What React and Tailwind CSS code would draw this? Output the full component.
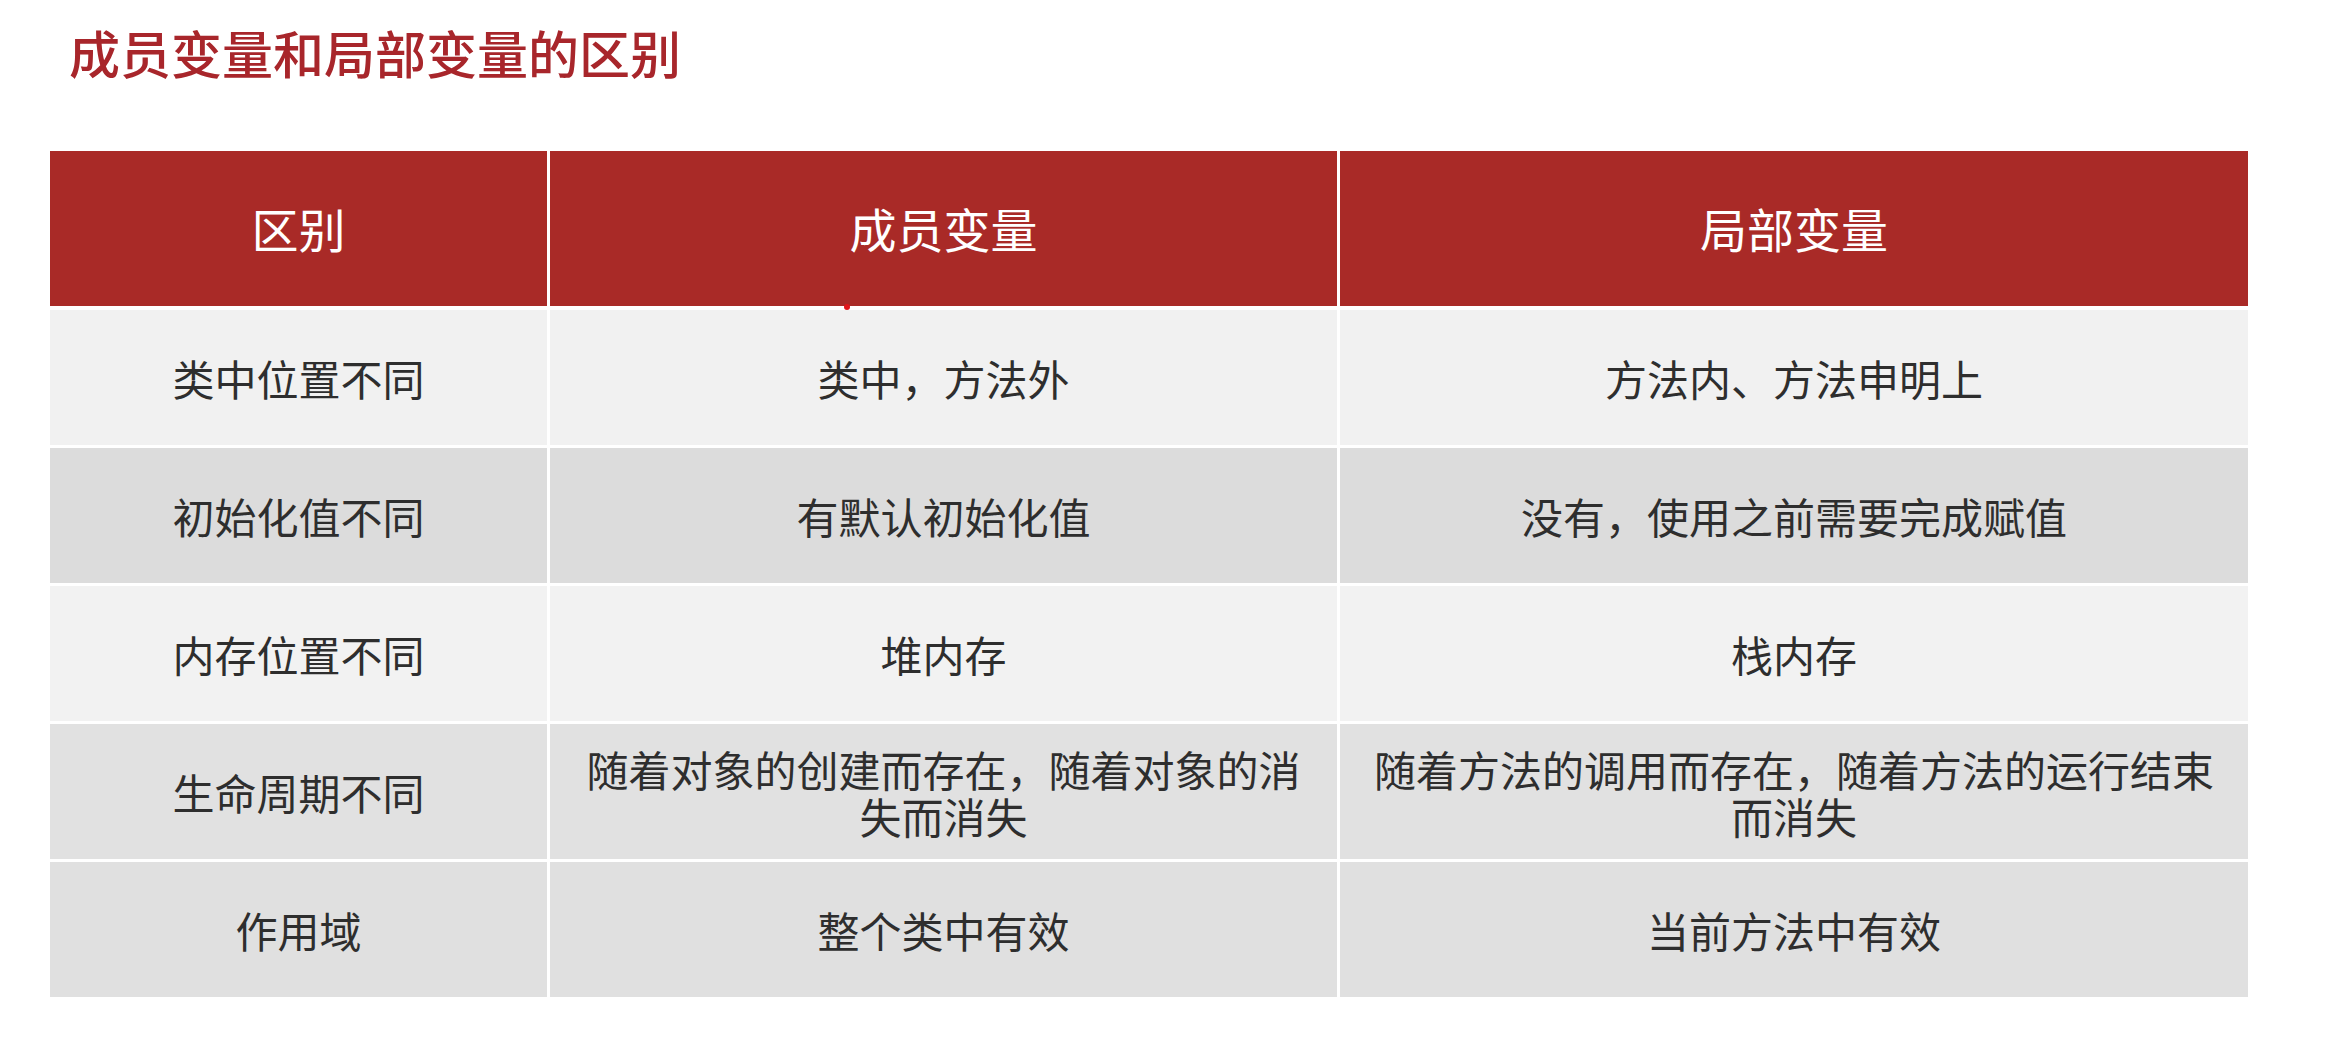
import React from "react";

const rows = [
  { k: "类中位置不同", a: "类中，方法外", b: "方法内、方法申明上", bg: "bg-[#f1f1f1]" },
  { k: "初始化值不同", a: "有默认初始化值", b: "没有，使用之前需要完成赋值", bg: "bg-[#dcdcdc]" },
  { k: "内存位置不同", a: "堆内存", b: "栈内存", bg: "bg-[#f2f2f2]" },
  {
    k: "生命周期不同",
    a: "随着对象的创建而存在，随着对象的消失而消失",
    b: "随着方法的调用而存在，随着方法的运行结束而消失",
    bg: "bg-[#e1e1e1]",
  },
  { k: "作用域", a: "整个类中有效", b: "当前方法中有效", bg: "bg-[#e0e0e0]" },
];

export default function App() {
  return (
    <div
      className="w-[2328px] h-[1041px] bg-white overflow-hidden"
      style={{ fontFamily: '"Noto Sans CJK SC", "Noto Sans", sans-serif' }}
    >
      <div className="pl-[69px] pt-[24px] h-[151px]">
        <h1 className="text-[51px] leading-[56px] text-[#a8262b] font-medium">
          成员变量和局部变量的区别
        </h1>
      </div>
      <div className="ml-[50px] w-[2198px] grid grid-cols-[497px_787px_908px] gap-x-[3px]">
        <div className="h-[155px] bg-[#a92a27] flex items-center justify-center text-white text-[47px]">
          区别
        </div>
        <div className="relative h-[155px] bg-[#a92a27] flex items-center justify-center text-white text-[47px]">
          成员变量
          <span className="absolute left-[294px] bottom-[-4px] w-[6px] h-[6px] rounded-full bg-[#e0161b]" />
        </div>
        <div className="h-[155px] bg-[#a92a27] flex items-center justify-center text-white text-[47px]">
          局部变量
        </div>
      </div>
      <div className="ml-[50px] mt-[4px] w-[2198px] grid grid-cols-[497px_787px_908px] gap-x-[3px] gap-y-[3px] text-[#2e2e2e] text-[42px] leading-[47px]">
        {rows.map((r, i) => (
          <React.Fragment key={i}>
            <div className={`h-[135px] ${r.bg} flex items-center justify-center text-center px-[30px]`}>
              {r.k}
            </div>
            <div className={`h-[135px] ${r.bg} flex items-center justify-center text-center px-[30px]`}>
              {r.a}
            </div>
            <div className={`h-[135px] ${r.bg} flex items-center justify-center text-center px-[30px]`}>
              {r.b}
            </div>
          </React.Fragment>
        ))}
      </div>
    </div>
  );
}
